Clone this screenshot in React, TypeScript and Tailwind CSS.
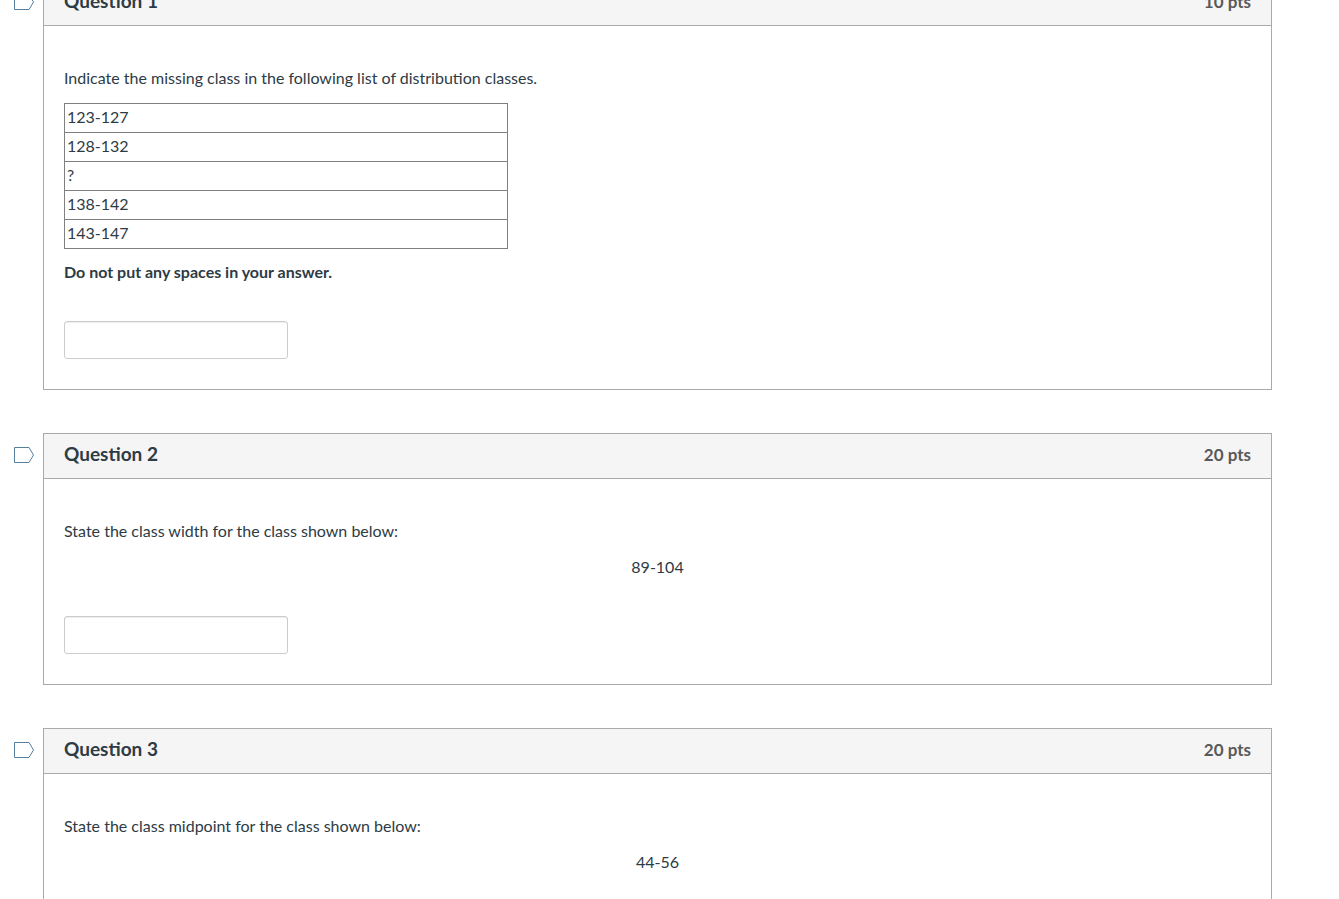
import { useState } from "react";
import type { ReactNode } from "react";

interface QuestionCardProps {
  number: number;
  points: number;
  children: ReactNode;
}

const classes = ["123-127", "128-132", "?", "138-142", "143-147"];

function FlagButton({ number }: { number: number }) {
  const [flagged, setFlagged] = useState(false);

  return (
    <button
      type="button"
      aria-label={`Flag question ${number}`}
      aria-pressed={flagged}
      onClick={() => setFlagged(!flagged)}
      className="mt-3.5 ml-3.5 h-4 w-5 shrink-0 cursor-pointer"
    >
      <svg width="20" height="16" viewBox="0 0 20 16" fill={flagged ? "#f7b93e" : "none"}>
        <path d="M0.5 0.5H15L19.5 8L15 15.5H0.5Z" stroke="#557f9f" strokeWidth="1" />
      </svg>
    </button>
  );
}

function QuestionCard({ number, points, children }: QuestionCardProps) {
  const [answer, setAnswer] = useState("");

  return (
    <section className="flex items-start">
      <FlagButton number={number} />
      <div className="ml-[9px] min-w-0 flex-1 border border-[#aaaaaa]">
        <header className="flex h-[45px] items-center justify-between border-b border-[#aaaaaa] bg-[#f5f5f5] px-5">
          <h2 className="pb-1 text-[19px] leading-6 font-bold">Question {number}</h2>
          <span className="pb-0.5 text-[17px] leading-6 font-bold text-[#595959]">{points} pts</span>
        </header>
        <div className="px-5 pt-10 pb-[30px]">
          {children}
          <input
            type="text"
            aria-label={`Answer to question ${number}`}
            value={answer}
            onChange={(e) => setAnswer(e.target.value)}
            className="mt-[37px] block h-[38px] w-56 rounded-[3px] border border-[#cccccc] bg-white px-2 shadow-[inset_0_1px_1px_rgba(0,0,0,0.075)]"
          />
        </div>
      </div>
    </section>
  );
}

export default function App() {
  return (
    <div className="h-screen overflow-hidden bg-white font-['Lato','Liberation_Sans',sans-serif] text-base leading-6 text-[#2d3b45]">
      <main className="-mt-5 mr-[67px] flex flex-col gap-[43px]">
        <QuestionCard number={1} points={10}>
          <p>Indicate the missing class in the following list of distribution classes.</p>
          <table className="mt-[13px] mb-[11px] w-[444px] border-collapse">
            <tbody>
              {classes.map((item) => (
                <tr key={item}>
                  <td className="border border-[#808080] px-0.5 pt-px pb-[3px]">{item}</td>
                </tr>
              ))}
            </tbody>
          </table>
          <p className="font-bold">Do not put any spaces in your answer.</p>
        </QuestionCard>

        <QuestionCard number={2} points={20}>
          <p>State the class width for the class shown below:</p>
          <p className="mt-3 text-center">89-104</p>
        </QuestionCard>

        <QuestionCard number={3} points={20}>
          <p>State the class midpoint for the class shown below:</p>
          <p className="mt-3 text-center">44-56</p>
        </QuestionCard>
      </main>
    </div>
  );
}
